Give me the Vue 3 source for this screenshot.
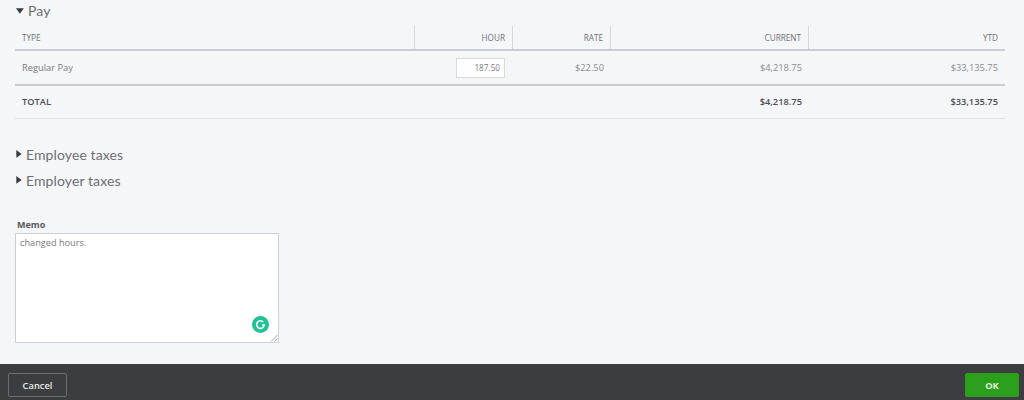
<script setup>
const columns = ['TYPE', 'HOUR', 'RATE', 'CURRENT', 'YTD']
</script>

<template>
  <div class="page">
    <main class="content">
      <div class="section-head open">
        <svg class="caret down" width="8" height="6" viewBox="0 0 8 6"><path d="M0 0.3H7.8L3.9 5.8Z" /></svg>
        <span>Pay</span>
      </div>

      <div class="table">
        <div class="row header">
          <div v-for="(c, i) in columns" :key="c" class="cell" :class="{ left: i === 0 }">{{ c }}</div>
        </div>
        <div class="row body">
          <div class="cell left">Regular Pay</div>
          <div class="cell"><div class="hour-input">187.50</div></div>
          <div class="cell">$22.50</div>
          <div class="cell">$4,218.75</div>
          <div class="cell">$33,135.75</div>
        </div>
        <div class="row total">
          <div class="cell left">TOTAL</div>
          <div class="cell"></div>
          <div class="cell"></div>
          <div class="cell">$4,218.75</div>
          <div class="cell">$33,135.75</div>
        </div>
      </div>

      <div class="section-head closed first">
        <svg class="caret" width="6" height="8" viewBox="0 0 6 8"><path d="M0.3 0V7.8L5.6 3.9Z" /></svg>
        <span>Employee taxes</span>
      </div>
      <div class="section-head closed second">
        <svg class="caret" width="6" height="8" viewBox="0 0 6 8"><path d="M0.3 0V7.8L5.6 3.9Z" /></svg>
        <span>Employer taxes</span>
      </div>

      <label class="memo-label">Memo</label>
      <div class="memo">
        <span class="memo-text">changed hours.</span>
        <svg class="grammarly" width="17" height="17" viewBox="0 0 17 17">
          <circle cx="8.5" cy="8.5" r="8.5" fill="#1fc195" />
          <path d="M11.3 6.1A3.8 3.8 0 1 0 12.2 9H10" fill="none" stroke="#fff" stroke-width="1.6" />
        </svg>
        <svg class="resize" width="8" height="8" viewBox="0 0 8 8">
          <path d="M7.5 1L1 7.5M7.5 4.5L4.5 7.5" stroke="#a3a5aa" stroke-width="1" fill="none" />
        </svg>
      </div>
    </main>

    <footer class="footer">
      <button class="btn cancel">Cancel</button>
      <button class="btn ok">OK</button>
    </footer>
  </div>
</template>

<style scoped>
.page {
  width: 1024px;
  height: 400px;
  display: flex;
  flex-direction: column;
  overflow: hidden;
  background: #f5f6f8;
  font-family: "Open Sans", "Liberation Sans", sans-serif;
  color: #6b6c72;
}
.content {
  flex: 1;
  padding: 0 19px 0 15px;
  display: flex;
  flex-direction: column;
}
.section-head {
  display: flex;
  align-items: center;
  gap: 4px;
  font-family: Lato, "Open Sans", sans-serif;
  font-size: 14px;
  letter-spacing: 0.1px;
  color: #6d6e74;
  height: 20px;
}
.caret {
  fill: #393a3d;
  flex: none;
  margin-left: 1px;
}
.caret.down {
  margin-top: 1px;
}
.section-head.first {
  margin-top: 25px;
}
.section-head.second {
  margin-top: 6px;
}
.table {
  margin-top: 6px;
  font-size: 9.3px;
}
.row {
  display: grid;
  grid-template-columns: 400px 98px 98px 198px 196px;
}
.cell {
  display: flex;
  align-items: center;
  justify-content: flex-end;
  padding: 0 7px;
}
.cell.left {
  justify-content: flex-start;
}
.header {
  height: 23px;
  border-bottom: 2px solid #c9ced6;
  box-sizing: content-box;
  font-size: 8.2px;
  color: #6f7076;
}
.header .cell {
  border-right: 1px solid #d4d7dc;
}
.header .cell:last-child {
  border-right: none;
}
.body {
  height: 33px;
  border-bottom: 2px solid #c9ced6;
  color: #8b8c91;
}
.body .cell.left {
  color: #77787d;
}
.hour-input {
  width: 49px;
  height: 20px;
  box-sizing: border-box;
  background: #fff;
  border: 1px solid #d9dbdf;
  display: flex;
  align-items: center;
  justify-content: flex-end;
  padding-right: 4px;
  margin-right: 1px;
  font-size: 8.2px;
  color: #77787d;
}
.total {
  height: 32px;
  border-bottom: 1px solid #dfe2e6;
  font-weight: 600;
  color: #4c4d52;
}
.total .cell {
  padding-bottom: 2px;
}
.memo-label {
  margin-top: 29px;
  margin-left: 2px;
  font-size: 9px;
  font-weight: 700;
  color: #55565b;
  line-height: 12px;
}
.memo {
  position: relative;
  margin-top: 2px;
  width: 264px;
  height: 110px;
  box-sizing: border-box;
  background: #fff;
  border: 1px solid #cdd0d5;
  padding: 3px 4px;
}
.memo-text {
  font-size: 9.2px;
  line-height: 12px;
  color: #77787d;
  display: block;
}
.grammarly {
  position: absolute;
  right: 9px;
  bottom: 9px;
}
.resize {
  position: absolute;
  right: 0;
  bottom: 0;
}
.footer {
  height: 36px;
  flex: none;
  background: #3c3d40;
  display: flex;
  align-items: flex-end;
  justify-content: space-between;
  padding: 0 5px 3px 8px;
  box-sizing: border-box;
}
.btn {
  font-family: "Open Sans", "Liberation Sans", sans-serif;
  font-size: 9.3px;
  font-weight: 600;
  height: 24px;
  border-radius: 2px;
  padding: 0;
  color: #fff;
}
.cancel {
  width: 59px;
  background: transparent;
  border: 1px solid #6c6d71;
  color: #e8e8e9;
}
.ok {
  width: 54px;
  background: #2ca01c;
  border: none;
  font-weight: 700;
  color: #dff0dc;
}
</style>
